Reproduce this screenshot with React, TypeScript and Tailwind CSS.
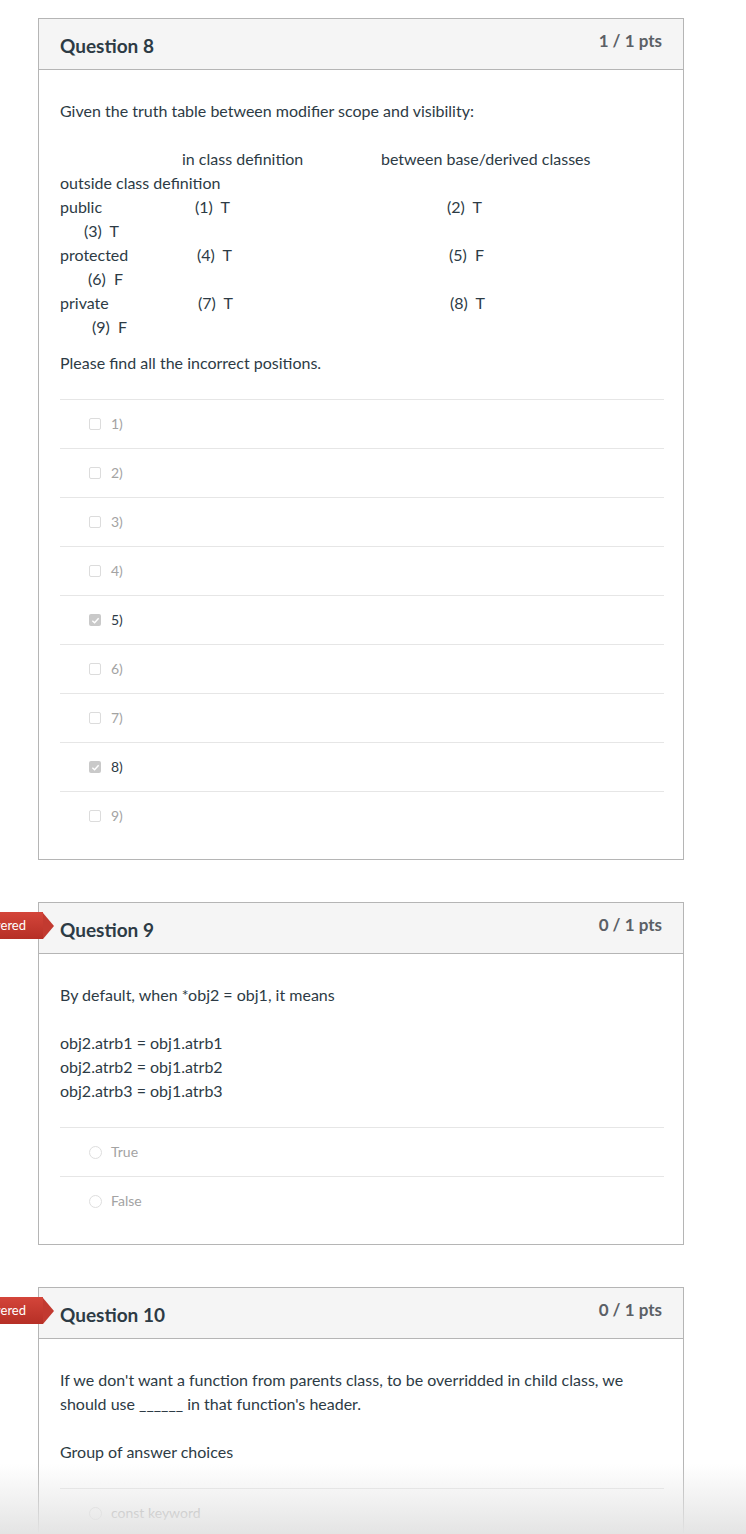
import React from 'react';

const font = { fontFamily: 'Lato, "Open Sans", sans-serif' };

function Ribbon() {
  return (
    <div className="absolute right-[calc(100%-15px)] top-[9px] flex h-[27px] items-center">
      <div className="flex h-[27px] items-center justify-end rounded-l-sm bg-gradient-to-b from-[#d4453a] to-[#b62f26] pl-3 pr-[17px] text-[13px] text-white">
        Unanswered
      </div>
      <div className="h-0 w-0 border-y-[13.5px] border-l-[11px] border-y-transparent border-l-[#c23a30]" />
    </div>
  );
}

function Card({
  title,
  pts,
  unanswered,
  children,
}: {
  title: string;
  pts: string;
  unanswered?: boolean;
  children: React.ReactNode;
}) {
  return (
    <div className="relative w-[646px] border border-[#b5b5b5] bg-white">
      {unanswered && <Ribbon />}
      <div className="flex h-[51px] items-start justify-between border-b border-[#b5b5b5] bg-[#f5f5f5] pl-[21px] pr-[21px]">
        <h2 className="mt-[14px] text-[19px] font-bold leading-[26px] text-[#2d3b45]">{title}</h2>
        <span className="mt-[11px] text-[17px] font-bold leading-[22px] text-[#5b6066]">{pts}</span>
      </div>
      <div className="pl-[21px] pr-[19px] pt-[29px] pb-[19px] text-[16px] leading-[24px] text-[#2d3b45]">
        {children}
      </div>
    </div>
  );
}

function CheckRow({ label, checked }: { label: string; checked?: boolean }) {
  return (
    <div className="flex h-[49px] items-center border-t border-[#e6e6e6] pl-[29px]">
      {checked ? (
        <span className="flex h-[12px] w-[12px] items-center justify-center rounded-[2px] bg-[#c9c9c9]">
          <svg width="9" height="9" viewBox="0 0 10 10" fill="none">
            <path d="M1.5 5.2 L4 7.5 L8.5 2.5" stroke="white" strokeWidth="1.6" />
          </svg>
        </span>
      ) : (
        <span className="h-[12px] w-[12px] rounded-[2px] border border-[#dcdcdc] bg-white" />
      )}
      <span className={`ml-[10px] text-[14px] ${checked ? 'text-[#2d3b45]' : 'text-[#a3a3a3]'}`}>{label}</span>
    </div>
  );
}

function RadioRow({ label }: { label: string }) {
  return (
    <div className="flex h-[49px] items-center border-t border-[#e6e6e6] pl-[29px]">
      <span className="h-[13px] w-[13px] rounded-full border border-[#dedede] bg-white" />
      <span className="ml-[9px] text-[14px] text-[#a3a3a3]">{label}</span>
    </div>
  );
}

export default function App() {
  return (
    <div className="relative h-[1534px] overflow-hidden bg-white" style={font}>
      <div className="flex flex-col gap-[42px] pl-[38px] pt-[18px]">
        {/* Question 8 */}
        <Card title="Question 8" pts="1 / 1 pts">
          <p className="mb-6">Given the truth table between modifier scope and visibility:</p>
          <div className="whitespace-pre">
            <div className="flex">
              <span className="w-[321px] pl-[122px]">in class definition</span>
              <span>between base/derived classes</span>
            </div>
            <div>outside class definition</div>
            <div className="flex">
              <span className="w-[135px]">public</span>
              <span className="w-[252px]">(1)  T</span>
              <span>(2)  T</span>
            </div>
            <div className="pl-[24px]">(3)  T</div>
            <div className="flex">
              <span className="w-[137px]">protected</span>
              <span className="w-[252px]">(4)  T</span>
              <span>(5)  F</span>
            </div>
            <div className="pl-[28px]">(6)  F</div>
            <div className="flex">
              <span className="w-[138px]">private</span>
              <span className="w-[252px]">(7)  T</span>
              <span>(8)  T</span>
            </div>
            <div className="pl-[32px]">(9)  F</div>
          </div>
          <p className="mt-3 mb-6">Please find all the incorrect positions.</p>
          <div>
            <CheckRow label="1)" />
            <CheckRow label="2)" />
            <CheckRow label="3)" />
            <CheckRow label="4)" />
            <CheckRow label="5)" checked />
            <CheckRow label="6)" />
            <CheckRow label="7)" />
            <CheckRow label="8)" checked />
            <CheckRow label="9)" />
          </div>
        </Card>

        {/* Question 9 */}
        <Card title="Question 9" pts="0 / 1 pts" unanswered>
          <p className="mb-6">By default, when *obj2 = obj1, it means</p>
          <p className="mb-6">
            obj2.atrb1 = obj1.atrb1
            <br />
            obj2.atrb2 = obj1.atrb2
            <br />
            obj2.atrb3 = obj1.atrb3
          </p>
          <div>
            <RadioRow label="True" />
            <RadioRow label="False" />
          </div>
        </Card>

        {/* Question 10 */}
        <Card title="Question 10" pts="0 / 1 pts" unanswered>
          <p className="mb-6">
            If we don't want a function from parents class, to be overridded in child class, we
            <br />
            should use ______ in that function's header.
          </p>
          <p className="mb-6">Group of answer choices</p>
          <div>
            <RadioRow label="const keyword" />
            <RadioRow label="virtual keyword" />
          </div>
        </Card>
      </div>

      {/* bottom shade */}
      <div className="pointer-events-none absolute bottom-0 left-0 right-0 h-[70px] bg-gradient-to-b from-transparent to-[#e4e4e4]" />
    </div>
  );
}
